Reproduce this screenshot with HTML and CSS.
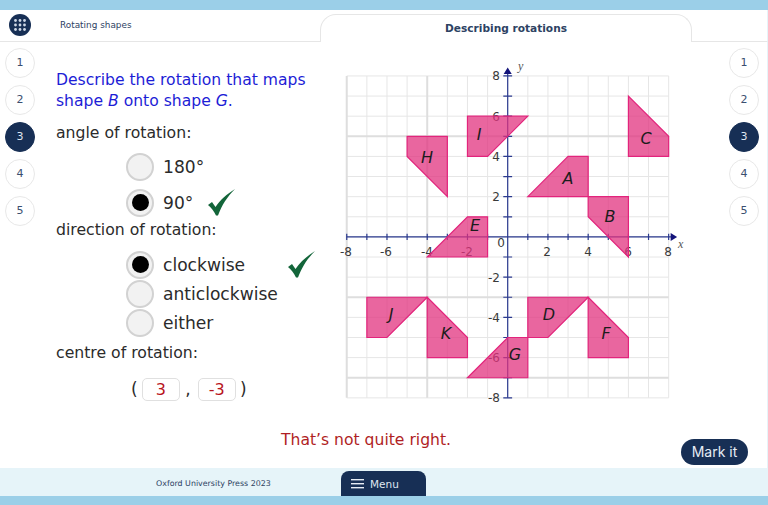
FILE: index.html
```html
<!DOCTYPE html>
<html lang="en">

<head>
    <meta charset="UTF-8">
    <meta name="viewport" content="width=device-width, initial-scale=1.0">
    <title>Rotating shapes</title>
    <link rel="stylesheet" href="styles.css">
</head>

<body>
    <div class="top_band"></div>

    <div class="header">
        <div class="header_left">
            <span class="grid_btn">
                <svg width="14" height="14" viewBox="0 0 14 14" fill="#cfd8e6">
                    <circle cx="2.5" cy="2.5" r="1.4"/><circle cx="7" cy="2.5" r="1.4"/><circle cx="11.5" cy="2.5" r="1.4"/>
                    <circle cx="2.5" cy="7" r="1.4"/><circle cx="7" cy="7" r="1.4"/><circle cx="11.5" cy="7" r="1.4"/>
                    <circle cx="2.5" cy="11.5" r="1.4"/><circle cx="7" cy="11.5" r="1.4"/><circle cx="11.5" cy="11.5" r="1.4"/>
                </svg>
            </span>
            <span class="unit_title">Rotating shapes</span>
        </div>
        <div class="tab">Describing rotations</div>
    </div>

    <div class="main">
        <div class="work">
            <ul class="steps">
                <li>1</li>
                <li>2</li>
                <li class="current">3</li>
                <li>4</li>
                <li>5</li>
            </ul>

            <div class="question">
                <p class="prompt">Describe the rotation that maps shape <i>B</i> onto shape <i>G</i>.</p>

                <p class="label label_first">angle of rotation:</p>
                <div class="options options_angle">
                    <div class="option"><span class="radio"></span>180°</div>
                    <div class="option"><span class="radio on"></span>90°
                        <svg class="tick tick_angle" width="27" height="27" viewBox="0 0 27 27"><path d="M0 16 L4 13 L7.500 18 C12 11 19 5 27 0 C19 8 14 16 10 26.500 L8 26.500 C6 22 3.500 19 0 16 Z" fill="#13653a"/></svg>
                    </div>
                </div>

                <p class="label">direction of rotation:</p>
                <div class="options options_direction">
                    <div class="option"><span class="radio on"></span>clockwise
                        <svg class="tick tick_direction" width="27" height="27" viewBox="0 0 27 27"><path d="M0 16 L4 13 L7.500 18 C12 11 19 5 27 0 C19 8 14 16 10 26.500 L8 26.500 C6 22 3.500 19 0 16 Z" fill="#13653a"/></svg>
                    </div>
                    <div class="option"><span class="radio"></span>anticlockwise</div>
                    <div class="option"><span class="radio"></span>either</div>
                </div>

                <p class="label">centre of rotation:</p>
                <div class="coords">
                    <span>(</span><span class="coord_box">3</span><span class="coord_comma">,</span><span class="coord_box">-3</span><span>)</span>
                </div>
            </div>

            <svg class="graph" width="350" height="360" viewBox="0 0 350 360">
                <g transform="translate(167.7 186.900) scale(20.12 -20.12)" fill="none">
                    <path class="grid_line" d="M-7-8V8M-6-8V8M-5-8V8M-3-8V8M-2-8V8M-1-8V8M0-8V8M1-8V8M2-8V8M3-8V8M4-8V8M5-8V8M6-8V8M7-8V8M8-8V8M-8-8H8M-8-6H8M-8-5H8M-8-4H8M-8-2H8M-8-1H8M-8 0H8M-8 1H8M-8 2H8M-8 3H8M-8 4H8M-8 6H8M-8 7H8M-8 8H8"/>
                    <path class="grid_line grid_major" d="M-8-8V8M-4-8V8M-8-7H8M-8-3H8M-8 5H8"/>
                    <path class="axis" d="M-8 0H8.150M0-8V8.150"/>
                    <path class="axis" d="M-8-.16V.16M-7-.16V.16M-6-.16V.16M-5-.16V.16M-4-.16V.16M-3-.16V.16M-2-.16V.16M-1-.16V.16M1-.16V.16M2-.16V.16M3-.16V.16M4-.16V.16M5-.16V.16M6-.16V.16M7-.16V.16M8-.16V.16"/>
                    <path class="axis" d="M-.22-8H.22M-.22-7H.22M-.22-6H.22M-.22-5H.22M-.22-4H.22M-.22-3H.22M-.22-2H.22M-.22-1H.22M-.22 1H.22M-.22 2H.22M-.22 3H.22M-.22 4H.22M-.22 5H.22M-.22 6H.22M-.22 7H.22M-.22 8H.22"/>
                    <path class="arrow" d="M8.100-.2L8.420 0L8.100.2ZM-.2 8.100L0 8.420L.2 8.100Z"/>
                </g>

                <g class="nums">
                    <text x="6" y="206">-8</text><text x="46" y="206">-6</text><text x="87" y="206">-4</text><text x="127" y="206">-2</text>
                    <text x="207" y="206">2</text><text x="248" y="206">4</text><text x="288" y="206">6</text><text x="328" y="206">8</text>
                    <text x="161" y="197">0</text>
                </g>
                <g class="nums nums_y">
                    <text x="160" y="30">8</text><text x="160" y="71">6</text><text x="160" y="111">4</text><text x="160" y="151">2</text>
                    <text x="160" y="232">-2</text><text x="160" y="272">-4</text><text x="160" y="312">-6</text><text x="160" y="352">-8</text>
                </g>
                <text class="axis_name" x="178" y="20">y</text>
                <text class="axis_name" x="338" y="198">x</text>

                <g transform="translate(167.7 186.900) scale(20.12 -20.12)">
                    <polygon class="shape" points="1,2 3,4 4,4 4,2"/>
                    <polygon class="shape" points="4,2 6,2 6,-1 4,1"/>
                    <polygon class="shape" points="6,7 8,5 8,4 6,4"/>
                    <polygon class="shape" points="1,-3 4,-3 2,-5 1,-5"/>
                    <polygon class="shape" points="-4,-1 -1,-1 -1,1 -2,1"/>
                    <polygon class="shape" points="4,-3 6,-5 6,-6 4,-6"/>
                    <polygon class="shape" points="-2,-7 1,-7 1,-5 0,-5"/>
                    <polygon class="shape" points="-5,5 -3,5 -3,2 -5,4"/>
                    <polygon class="shape" points="-2,6 1,6 -1,4 -2,4"/>
                    <polygon class="shape" points="-7,-3 -4,-3 -6,-5 -7,-5"/>
                    <polygon class="shape" points="-4,-3 -2,-5 -2,-6 -4,-6"/>
                </g>

                <g class="letters">
                    <text x="228" y="134">A</text><text x="270" y="172">B</text><text x="306" y="94">C</text>
                    <text x="209" y="270">D</text><text x="135" y="181">E</text><text x="266" y="289">F</text>
                    <text x="175" y="310">G</text><text x="87" y="113">H</text><text x="139" y="90">I</text>
                    <text x="51" y="270">J</text><text x="106" y="289">K</text>
                </g>
            </svg>

            <ul class="steps steps_right">
                <li>1</li>
                <li>2</li>
                <li class="current">3</li>
                <li>4</li>
                <li>5</li>
            </ul>
        </div>

        <div class="result">
            <span class="feedback">That’s not quite right.</span>
            <span class="mark_btn">Mark it</span>
        </div>
    </div>

    <div class="footer">
        <span class="copyright">Oxford University Press 2023</span>
        <span class="menu_btn">
            <svg width="13" height="10" viewBox="0 0 13 10" fill="#e6ecf4"><rect y="0" width="13" height="1.400"/><rect y="4" width="13" height="1.400"/><rect y="8" width="13" height="1.400"/></svg>
            Menu
        </span>
    </div>

    <div class="bottom_band"></div>
</body>

</html>
```

FILE: styles.css
```css
* {
    margin: 0;
    padding: 0;
    box-sizing: border-box;
}

html,
body {
    width: 768px;
    height: 505px;
    overflow: hidden;
}

body {
    display: flex;
    flex-direction: column;
    background: #fff;
    color: #2b2b2b;
    font-family: "DejaVu Sans", Verdana, sans-serif;
}

.top_band {
    height: 10px;
    background: #9bcfe8;
}

.bottom_band {
    height: 9px;
    background: #9bcfe8;
}

/* header */
.header {
    height: 32px;
    display: flex;
    align-items: flex-end;
    border-bottom: 1px solid #e6e6e6;
    border-right: 1px solid #e6f4f9;
}

.header_left {
    width: 320px;
    height: 31px;
    display: flex;
    align-items: center;
    padding-left: 9px;
}

.grid_btn {
    width: 22px;
    height: 22px;
    border-radius: 50%;
    background: #172f55;
    display: flex;
    align-items: center;
    justify-content: center;
}

.unit_title {
    margin-left: 29px;
    font-size: 8.900px;
    color: #2d4263;
}

.tab {
    width: 372px;
    height: 28px;
    margin-bottom: -1px;
    padding-top: 7px;
    text-align: center;
    font-size: 10.600px;
    font-weight: bold;
    color: #2d4263;
    background: #fff;
    border: 1px solid #e6e6e6;
    border-bottom: 0;
    border-radius: 16px 16px 0 0;
}

/* middle */
.main {
    height: 427px;
    display: flex;
    flex-direction: column;
    border-right: 1px solid #e6f4f9;
}

.work {
    height: 375px;
    display: flex;
}

.steps {
    width: 56px;
    padding-top: 6px;
    padding-left: 5px;
    list-style: none;
    display: flex;
    flex-direction: column;
    gap: 7px;
}

.steps_right {
    width: 38px;
    padding-left: 0;
}

.steps li {
    width: 30px;
    height: 30px;
    border-radius: 50%;
    border: 1.500px solid #e8e8e8;
    background: #fff;
    display: flex;
    align-items: center;
    justify-content: center;
    font-size: 11px;
    color: #3a4f70;
}

.steps li.current {
    background: #172f55;
    border-color: #172f55;
    color: #dfe6f0;
}

.question {
    width: 284px;
    padding-top: 28px;
}

.prompt {
    width: 270px;
    font-size: 15.600px;
    line-height: 21px;
    color: #1d1dd6;
}

.label {
    font-size: 15.700px;
    line-height: 21px;
}

.label_first {
    margin-top: 10px;
}

.options {
    padding-left: 70px;
    display: flex;
    flex-direction: column;
}

.options_angle {
    gap: 8px;
    margin-top: 10px;
    margin-bottom: 2px;
}

.options_direction {
    gap: 1px;
    margin-top: 11px;
    margin-bottom: 5px;
}

.option {
    height: 28px;
    display: flex;
    align-items: center;
    font-size: 17.100px;
}

.radio {
    width: 28px;
    height: 28px;
    margin-right: 9px;
    border-radius: 50%;
    background: #f2f2f2;
    border: 2px solid #d2d2d2;
    display: flex;
    align-items: center;
    justify-content: center;
}

.radio.on::after {
    content: "";
    width: 17px;
    height: 17px;
    border-radius: 50%;
    background: #000;
}

.tick_angle {
    margin-left: 15px;
}

.tick_direction {
    margin-left: 43px;
}

.coords {
    margin-top: 15px;
    padding-left: 75px;
    display: flex;
    align-items: center;
    gap: 4px;
    font-size: 17px;
}

.coord_box {
    width: 38.500px;
    height: 23px;
    border: 1px solid #e0e0e0;
    border-radius: 5px;
    display: flex;
    align-items: center;
    justify-content: center;
    font-size: 16px;
    color: #b8141c;
}

.coord_comma {
    margin: 0 3px 0 1px;
}

/* graph */
.graph {
    display: block;
    margin-top: 8px;
    margin-right: 39px;
}

.grid_line {
    stroke: #e6e6e6;
    stroke-width: 1;
    vector-effect: non-scaling-stroke;
}

.grid_major {
    stroke: #dedede;
    stroke-width: 2;
}

.axis {
    stroke: #2b3a8f;
    stroke-width: 1.200;
    vector-effect: non-scaling-stroke;
}

.arrow {
    fill: #14147a;
}

.nums text {
    font-size: 12px;
    fill: #3a3a3a;
    text-anchor: middle;
}

.nums_y text {
    text-anchor: end;
}

.axis_name {
    font-family: "Liberation Serif", serif;
    font-style: italic;
    font-size: 12px;
    fill: #555;
}

.shape {
    fill: #e2337f;
    fill-opacity: .75;
    stroke: #e2247c;
    stroke-width: 1.200;
    vector-effect: non-scaling-stroke;
}

.letters text {
    font-size: 16px;
    font-style: italic;
    fill: #1c1c1c;
    text-anchor: middle;
}

/* feedback row */
.result {
    flex: 1;
    display: flex;
    justify-content: space-between;
    padding-left: 281px;
    padding-right: 19px;
}

.feedback {
    margin-top: 13px;
    font-size: 15.600px;
    line-height: 21px;
    color: #b01e24;
}

.mark_btn {
    width: 67px;
    height: 26px;
    margin-top: 22px;
    border-radius: 13px;
    background: #172f55;
    color: #e6ecf4;
    font-family: Inter, sans-serif;
    font-size: 14px;
    display: flex;
    align-items: center;
    justify-content: center;
}

/* footer */
.footer {
    height: 28px;
    display: flex;
    align-items: flex-end;
    background: #e6f4f9;
}

.copyright {
    width: 185px;
    height: 25px;
    margin-left: 156px;
    line-height: 25px;
    font-size: 7.900px;
    color: #2d4263;
}

.menu_btn {
    width: 85px;
    height: 25px;
    padding-left: 10px;
    display: flex;
    align-items: center;
    gap: 6px;
    border-radius: 8px 8px 0 0;
    background: #172f55;
    color: #dfe6f0;
    font-size: 10.500px;
}
```
